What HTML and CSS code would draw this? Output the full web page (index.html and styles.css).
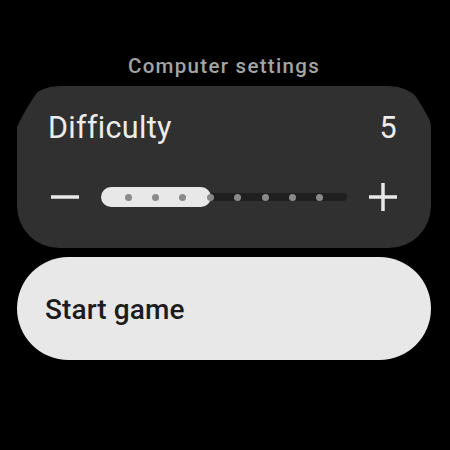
FILE: index.html
```html
<!DOCTYPE html>
<html lang="en">
<head>
  <meta charset="UTF-8" />
  <title>Computer settings</title>
  <link rel="stylesheet" href="styles.css">
</head>
<body>
  <div class="screen">
    <div class="title">Computer settings</div>

    <div class="card">
      <div class="card-head">
        <span class="label">Difficulty</span>
        <span class="value">5</span>
      </div>
      <div class="stepper">
        <svg class="btn" width="28" height="28" viewBox="0 0 28 28">
          <line x1="0" y1="14" x2="28" y2="14" stroke="#e8e8e8" stroke-width="3.5" />
        </svg>
        <div class="track">
          <div class="fill" style="width:110px"></div>
          <span class="dot"></span>
          <span class="dot"></span>
          <span class="dot"></span>
          <span class="dot"></span>
          <span class="dot"></span>
          <span class="dot"></span>
          <span class="dot"></span>
          <span class="dot"></span>
        </div>
        <svg class="btn" width="28" height="28" viewBox="0 0 28 28">
          <line x1="0" y1="14" x2="28" y2="14" stroke="#e8e8e8" stroke-width="3.5" />
          <line x1="14" y1="0" x2="14" y2="28" stroke="#e8e8e8" stroke-width="3.5" />
        </svg>
      </div>
    </div>

    <div class="chip">Start game</div>
  </div>
</body>
</html>
```

FILE: styles.css
```css
body {
  margin: 0;
  background: #000;
  font-family: Roboto, "Noto Sans", sans-serif;
}
.screen {
  width: 450px;
  height: 450px;
  clip-path: circle(230px at 225px 225px);
  background: #000;
  padding: 54px 19px 0 17px;
  box-sizing: border-box;
}
.title {
  text-align: center;
  font-size: 20.5px;
  line-height: 24px;
  font-weight: 500;
  letter-spacing: 1.3px;
  color: #a4a4a4;
}
.card {
  margin-top: 8px;
  height: 162px;
  box-sizing: border-box;
  background: #303030;
  border-radius: 42px;
  padding: 24px 34px 0;
}
.card-head {
  display: flex;
  justify-content: space-between;
  margin: 0 0 0 -3px;
  font-size: 30.5px;
  line-height: 36px;
  letter-spacing: 0.3px;
  color: #ececec;
}
.stepper {
  margin-top: 37px;
  display: flex;
  align-items: center;
  gap: 22px;
  height: 28px;
}
.btn {
  flex: none;
  display: block;
}
.track {
  position: relative;
  flex: 1;
  height: 8px;
  border-radius: 4px;
  background: #1f1f1f;
  display: flex;
  align-items: center;
  justify-content: space-between;
  padding: 0 23.8px;
}
.fill {
  position: absolute;
  left: 0;
  top: -6px;
  height: 20px;
  border-radius: 10px;
  background: #e8e8e8;
}
.dot {
  position: relative;
  width: 7px;
  height: 7px;
  border-radius: 50%;
  background: #8a8a8a;
}
.chip {
  margin-top: 9px;
  height: 103px;
  border-radius: 52px;
  background: #e8e8e8;
  color: #1c1c1c;
  display: flex;
  align-items: center;
  padding: 3px 0 0 28px;
  box-sizing: border-box;
  font-size: 28px;
  line-height: 34px;
  font-weight: 500;
  letter-spacing: 0.1px;
}
```
